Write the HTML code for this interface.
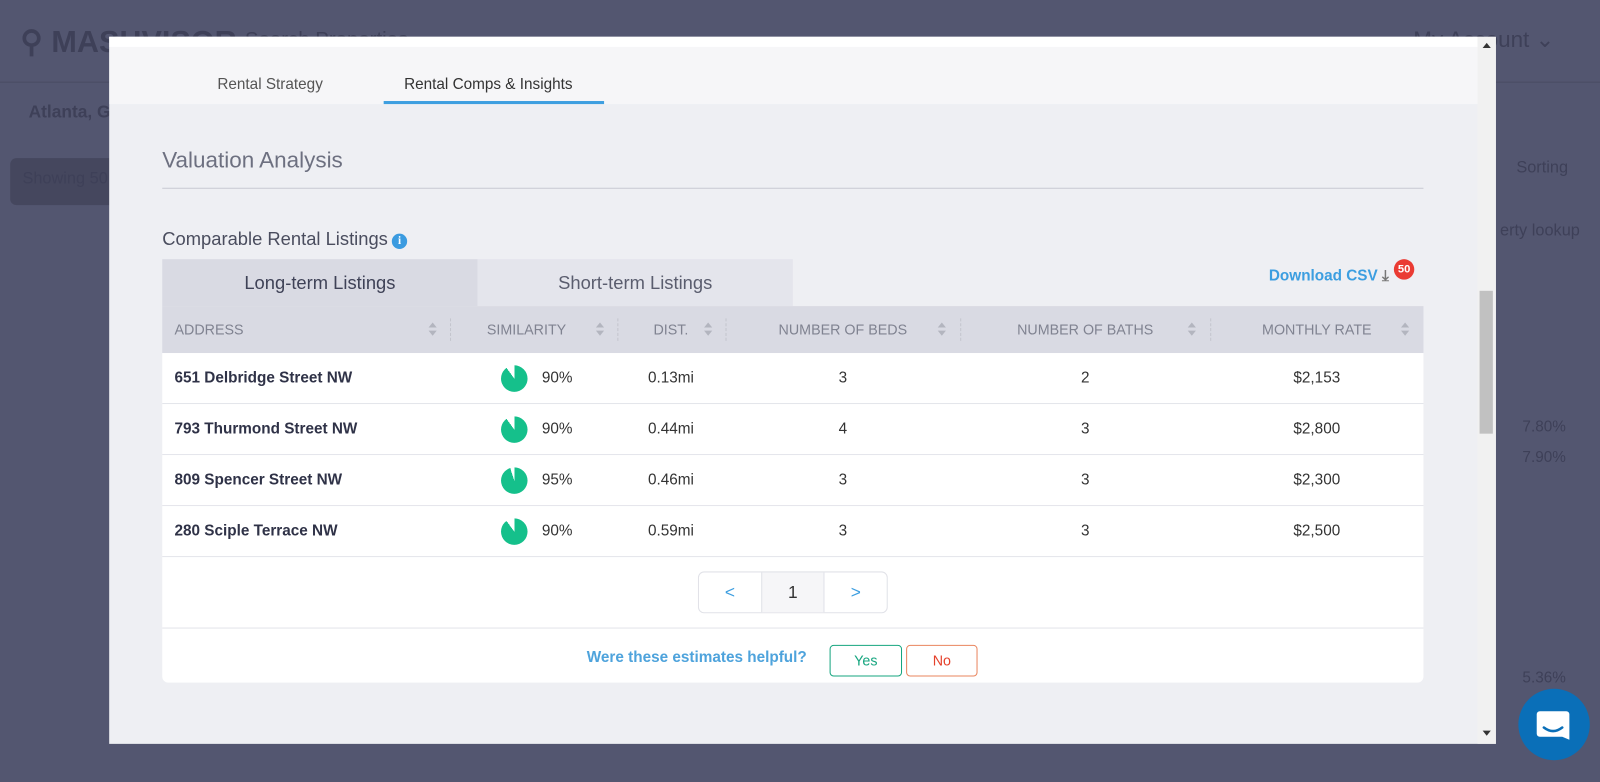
<!DOCTYPE html>
<html><head><meta charset="utf-8"><style>
*{box-sizing:border-box;margin:0;padding:0}
html,body{width:1600px;height:782px;overflow:hidden;background:#535670;font-family:"Liberation Sans",sans-serif}
#w{position:absolute;left:0;top:0;width:1568px;height:766px;transform:scale(1.0204);transform-origin:0 0}
.bg{position:absolute;color:#3e4058;font-size:20px}
.modal{position:absolute;left:107px;top:36px;width:1359px;height:693px;background:#eeeff3;overflow:hidden}
.top{position:absolute;left:0;top:0;width:1341px;height:66px;background:#f6f6f8;border-top:10px solid #fff}
.tab{position:absolute;top:28px;font-size:15px;color:#555}
.sb{position:absolute;right:0;top:0;width:18px;height:693px;background:#f1f1f1}
.thumb{position:absolute;right:3px;top:249px;width:13px;height:140px;background:#c1c1c1}
h2{position:absolute;left:52px;top:108px;font-weight:normal;font-size:22px;color:#6d7080}
.hr{position:absolute;left:52px;top:148px;width:1236px;height:1px;background:#c9cad2}
.sub{position:absolute;left:52px;top:188px;font-size:18px;color:#4a4d5e}
.info{display:inline-block;width:15px;height:15px;border-radius:50%;background:#3b9be0;color:#fff;font-size:11px;font-weight:bold;text-align:center;line-height:15px;vertical-align:1px;margin-left:4px;font-family:"Liberation Serif",serif}
.t{position:absolute;left:52px;top:218px;width:1236px}
.tabs{height:46px;position:relative}
.lt{position:absolute;left:0;top:0;width:309px;height:46px;background:#d9dae3;text-align:center;line-height:46px;font-size:18px;color:#3f4257}
.st{position:absolute;left:309px;top:0;width:309px;height:46px;background:#e4e5ec;text-align:center;line-height:46px;font-size:18px;color:#5a5d6e}
.csv{position:absolute;right:34px;top:8px;font-size:15px;font-weight:bold;color:#3c9ee0}
.badge{position:absolute;right:9px;top:0;width:20px;height:20px;border-radius:50%;background:#ea3b33;color:#fff;font-size:11px;font-weight:bold;text-align:center;line-height:20px}
.head{height:46px;background:#d9dae3;position:relative;font-size:14px;color:#808391}
.row{height:50px;background:#fff;border-bottom:1px solid #e3e4ea;position:relative;font-size:15px;color:#333}
.c{position:absolute;top:0;height:100%;display:flex;align-items:center;justify-content:center}
.a{left:12px;font-weight:bold;color:#2f3247;justify-content:flex-start}
.arr{position:absolute;top:16px;width:8px;height:14px}
.arr:before{content:"";position:absolute;left:0;top:0;border:4px solid transparent;border-bottom:5px solid #b3b5bf;border-top:0}
.arr:after{content:"";position:absolute;left:0;top:8px;border:4px solid transparent;border-top:5px solid #b3b5bf;border-bottom:0}
.dv{position:absolute;top:12px;height:22px;border-left:1px dashed #c4c5ce}
.pie{width:26px;height:26px;border-radius:50%;margin-right:14px}
.p90{background:conic-gradient(#15c08b 0 324deg,#fff 324deg)}
.p95{background:conic-gradient(#15c08b 0 342deg,#fff 342deg)}
.pag{height:70px;background:#fff;border-bottom:1px solid #e3e4ea;position:relative}
.pg{position:absolute;left:525px;top:14px;width:186px;height:41px;border:1px solid #e1e2e8;border-radius:6px;display:flex}
.pg div{flex:1;display:flex;align-items:center;justify-content:center;color:#3c9ee0;font-size:17px}
.fb{height:53px;background:#fff;border-radius:0 0 6px 6px;position:relative}
.q{position:absolute;left:416px;top:20px;font-size:15px;font-weight:bold;color:#4ea3dc}
.btn{position:absolute;top:16px;width:71px;height:31px;border-radius:4px;font-size:14px;text-align:center;line-height:29px}
</style></head><body><div id="w">
<div class="bg" style="left:20px;top:24px;font-size:30px;font-weight:bold">⚲ MASHVISOR</div>
<div class="bg" style="left:240px;top:28px">Search Properties</div>
<div class="bg" style="left:1385px;top:26px;font-size:22px">My Account ⌄</div>
<div class="bg" style="left:1486px;top:156px;font-size:16px">Sorting</div>
<div class="bg" style="left:1470px;top:218px;font-size:16px">erty lookup</div>
<div class="bg" style="left:1492px;top:410px;font-size:15px">7.80%</div>
<div class="bg" style="left:1492px;top:440px;font-size:15px">7.90%</div>
<div class="bg" style="left:1492px;top:656px;font-size:15px">5.36%</div>
<div class="bg" style="left:10px;top:155px;width:130px;height:46px;background:#45475e;border-radius:6px;font-size:16px;padding:12px">Showing 50</div>
<div class="bg" style="left:28px;top:100px;font-size:17px;font-weight:bold">Atlanta, G</div>
<div class="bg" style="left:0;width:1600px;height:1px;top:80px;background:#4a4c63"></div>

<div class="modal">
<div class="top">
<div class="tab" style="left:106px">Rental Strategy</div>
<div class="tab" style="left:289px;color:#333">Rental Comps &amp; Insights</div>
<div style="position:absolute;left:269px;top:53px;width:216px;height:3px;background:#3e9fe0"></div>
</div>
<div class="sb"><div style="position:absolute;left:5px;top:6px;border:4px solid transparent;border-bottom:5px solid #333;border-top:0"></div><div class="thumb"></div><div style="position:absolute;left:5px;top:680px;border:4px solid transparent;border-top:5px solid #333;border-bottom:0"></div></div>
<h2>Valuation Analysis</h2>
<div class="hr"></div>
<div class="sub">Comparable Rental Listings<span class="info">i</span></div>
<div class="t">
<div class="tabs"><div class="lt">Long-term Listings</div><div class="st">Short-term Listings</div>
<div class="csv">Download CSV <span style="color:#777">⤓</span></div><div class="badge">50</div></div>
<div class="head">
<div class="c" style="left:12px;justify-content:flex-start">ADDRESS</div><div class="arr" style="left:261px"></div><div class="dv" style="left:282px"></div>
<div class="c" style="left:282px;width:150px">SIMILARITY</div><div class="arr" style="left:425px"></div><div class="dv" style="left:446px"></div>
<div class="c" style="left:446px;width:105px">DIST.</div><div class="arr" style="left:531px"></div><div class="dv" style="left:552px"></div>
<div class="c" style="left:552px;width:230px">NUMBER OF BEDS</div><div class="arr" style="left:760px"></div><div class="dv" style="left:782px"></div>
<div class="c" style="left:782px;width:245px">NUMBER OF BATHS</div><div class="arr" style="left:1005px"></div><div class="dv" style="left:1027px"></div>
<div class="c" style="left:1027px;width:209px">MONTHLY RATE</div><div class="arr" style="left:1214px"></div>
</div>
<div class="row"><div class="c a">651 Delbridge Street NW</div><div class="c" style="left:282px;width:170px"><div class="pie p90"></div>90%</div><div class="c" style="left:446px;width:105px">0.13mi</div><div class="c" style="left:552px;width:230px">3</div><div class="c" style="left:782px;width:245px">2</div><div class="c" style="left:1027px;width:209px">$2,153</div></div>
<div class="row"><div class="c a">793 Thurmond Street NW</div><div class="c" style="left:282px;width:170px"><div class="pie p90"></div>90%</div><div class="c" style="left:446px;width:105px">0.44mi</div><div class="c" style="left:552px;width:230px">4</div><div class="c" style="left:782px;width:245px">3</div><div class="c" style="left:1027px;width:209px">$2,800</div></div>
<div class="row"><div class="c a">809 Spencer Street NW</div><div class="c" style="left:282px;width:170px"><div class="pie p95"></div>95%</div><div class="c" style="left:446px;width:105px">0.46mi</div><div class="c" style="left:552px;width:230px">3</div><div class="c" style="left:782px;width:245px">3</div><div class="c" style="left:1027px;width:209px">$2,300</div></div>
<div class="row"><div class="c a">280 Sciple Terrace NW</div><div class="c" style="left:282px;width:170px"><div class="pie p90"></div>90%</div><div class="c" style="left:446px;width:105px">0.59mi</div><div class="c" style="left:552px;width:230px">3</div><div class="c" style="left:782px;width:245px">3</div><div class="c" style="left:1027px;width:209px">$2,500</div></div>
<div class="pag"><div class="pg"><div>&lt;</div><div style="background:#f6f6f8;color:#333;border-left:1px solid #e1e2e8;border-right:1px solid #e1e2e8">1</div><div>&gt;</div></div></div>
<div class="fb"><div class="q">Were these estimates helpful?</div>
<div class="btn" style="left:654px;border:1px solid #16a57f;color:#16a57f">Yes</div>
<div class="btn" style="left:729px;border:1px solid #e9855e;color:#e5412b;width:70px">No</div></div>
</div>
</div>
<div style="position:absolute;left:1488px;top:675px;width:70px;height:70px;border-radius:50%;background:#0a6fb8">
<svg width="70" height="70" viewBox="0 0 70 70"><path d="M21 22h26a3 3 0 0 1 3 3v25l-7-3H21a3 3 0 0 1-3-3V25a3 3 0 0 1 3-3z" fill="#fff"/><path d="M25 38q9 7 18 0" stroke="#0a6fb8" stroke-width="2.5" fill="none" stroke-linecap="round"/></svg></div>
</div></body></html>
